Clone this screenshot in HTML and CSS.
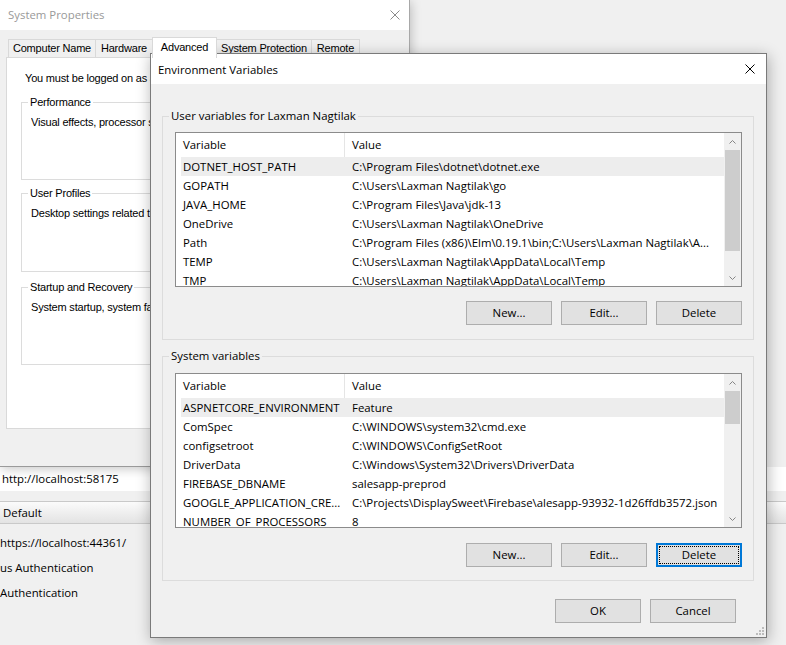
FILE: index.html
```html
<!DOCTYPE html>
<html>
<head>
<meta charset="utf-8">
<title>Environment Variables</title>
<link rel="stylesheet" href="styles.css">
</head>
<body>
<div class="desktop">

  <div class="vs">
    <div class="vs-top"></div>
    <div class="vs-url">http://localhost:58175</div>
    <div class="vs-combo">Default</div>
    <div class="vs-lines">
      <div>https://localhost:44361/</div>
      <div>us Authentication</div>
      <div>Authentication</div>
    </div>
  </div>

  <div class="win sysprops">
    <div class="titlebar sp-title">
      <span>System Properties</span>
      <svg class="close sp-close" width="10" height="10" viewBox="0 0 10 10"><path d="M0.5 0.5 L9.5 9.5 M9.5 0.5 L0.5 9.5" stroke="#8a8a8a" stroke-width="1" fill="none"/></svg>
    </div>
    <div class="sp-body">
      <div class="tabs">
        <div class="tab t-cn">Computer Name</div>
        <div class="tab t-hw">Hardware</div>
        <div class="tab t-adv active">Advanced</div>
        <div class="tab t-sp">System Protection</div>
        <div class="tab t-rm last">Remote</div>
      </div>
      <div class="panel">
        <div class="logon">You must be logged on as an Administrator to make most of these changes.</div>
        <fieldset class="sgrp g-perf">
          <legend>Performance</legend>
          <div class="desc">Visual effects, processor scheduling, memory usage, and virtual memory</div>
        </fieldset>
        <fieldset class="sgrp g-prof">
          <legend>User Profiles</legend>
          <div class="desc">Desktop settings related to your sign-in</div>
        </fieldset>
        <fieldset class="sgrp g-start">
          <legend>Startup and Recovery</legend>
          <div class="desc">System startup, system failure, and debugging information</div>
        </fieldset>
      </div>
    </div>
  </div>

  <div class="win env">
    <div class="titlebar env-title">
      <span>Environment Variables</span>
      <svg class="close env-close" width="10" height="10" viewBox="0 0 10 10"><path d="M0.5 0.5 L9.5 9.5 M9.5 0.5 L0.5 9.5" stroke="#000" stroke-width="1" fill="none"/></svg>
    </div>
    <div class="env-body">
      <fieldset class="grp g-user">
        <legend>User variables for Laxman Nagtilak</legend>
        <div class="lv">
          <div class="lv-main">
            <div class="lv-head"><div class="hc">Variable</div><div class="hc">Value</div></div>
            <div class="lv-row sel"><div>DOTNET_HOST_PATH</div><div>C:\Program Files\dotnet\dotnet.exe</div></div>
            <div class="lv-row"><div>GOPATH</div><div>C:\Users\Laxman Nagtilak\go</div></div>
            <div class="lv-row"><div>JAVA_HOME</div><div>C:\Program Files\Java\jdk-13</div></div>
            <div class="lv-row"><div>OneDrive</div><div>C:\Users\Laxman Nagtilak\OneDrive</div></div>
            <div class="lv-row"><div>Path</div><div>C:\Program Files (x86)\Elm\0.19.1\bin;C:\Users\Laxman Nagtilak\A...</div></div>
            <div class="lv-row"><div>TEMP</div><div>C:\Users\Laxman Nagtilak\AppData\Local\Temp</div></div>
            <div class="lv-row"><div>TMP</div><div>C:\Users\Laxman Nagtilak\AppData\Local\Temp</div></div>
          </div>
          <div class="sb">
            <div class="sb-btn"><svg width="7" height="4" viewBox="0 0 7 4"><polyline points="0.5,3.5 3.5,0.5 6.5,3.5" fill="none" stroke="#858585" stroke-width="1"/></svg></div>
            <div class="sb-track"><div class="sb-thumb thumb-user"></div></div>
            <div class="sb-btn"><svg width="7" height="4" viewBox="0 0 7 4"><polyline points="0.5,0.5 3.5,3.5 6.5,0.5" fill="none" stroke="#858585" stroke-width="1"/></svg></div>
          </div>
        </div>
        <div class="btns">
          <div class="btn">New...</div>
          <div class="btn">Edit...</div>
          <div class="btn">Delete</div>
        </div>
      </fieldset>

      <fieldset class="grp g-sys">
        <legend>System variables</legend>
        <div class="lv">
          <div class="lv-main">
            <div class="lv-head"><div class="hc">Variable</div><div class="hc">Value</div></div>
            <div class="lv-row sel"><div>ASPNETCORE_ENVIRONMENT</div><div>Feature</div></div>
            <div class="lv-row"><div>ComSpec</div><div>C:\WINDOWS\system32\cmd.exe</div></div>
            <div class="lv-row"><div>configsetroot</div><div>C:\WINDOWS\ConfigSetRoot</div></div>
            <div class="lv-row"><div>DriverData</div><div>C:\Windows\System32\Drivers\DriverData</div></div>
            <div class="lv-row"><div>FIREBASE_DBNAME</div><div>salesapp-preprod</div></div>
            <div class="lv-row"><div>GOOGLE_APPLICATION_CRE...</div><div>C:\Projects\DisplaySweet\Firebase\alesapp-93932-1d26ffdb3572.json</div></div>
            <div class="lv-row"><div>NUMBER_OF_PROCESSORS</div><div>8</div></div>
          </div>
          <div class="sb">
            <div class="sb-btn"><svg width="7" height="4" viewBox="0 0 7 4"><polyline points="0.5,3.5 3.5,0.5 6.5,3.5" fill="none" stroke="#858585" stroke-width="1"/></svg></div>
            <div class="sb-track"><div class="sb-thumb thumb-sys"></div></div>
            <div class="sb-btn"><svg width="7" height="4" viewBox="0 0 7 4"><polyline points="0.5,0.5 3.5,3.5 6.5,0.5" fill="none" stroke="#858585" stroke-width="1"/></svg></div>
          </div>
        </div>
        <div class="btns btns-sys">
          <div class="btn">New...</div>
          <div class="btn">Edit...</div>
          <div class="btn focus">Delete</div>
        </div>
      </fieldset>

      <div class="env-foot">
        <div class="btn">OK</div>
        <div class="btn">Cancel</div>
      </div>
    </div>
    <svg class="grip" width="8" height="8" viewBox="0 0 8 8">
      <rect x="6" y="0" width="2" height="2" fill="#bcbcbc"/>
      <rect x="3" y="3" width="2" height="2" fill="#bcbcbc"/>
      <rect x="6" y="3" width="2" height="2" fill="#bcbcbc"/>
      <rect x="0" y="6" width="2" height="2" fill="#bcbcbc"/>
      <rect x="3" y="6" width="2" height="2" fill="#bcbcbc"/>
      <rect x="6" y="6" width="2" height="2" fill="#bcbcbc"/>
    </svg>
  </div>

</div>
</body>
</html>
```

FILE: styles.css
```css
* { box-sizing: border-box; }

html, body {
  margin: 0;
  padding: 0;
}

body {
  width: 786px;
  height: 645px;
  overflow: hidden;
  background: #f0f0f0;
  font-family: "Open Sans", "Noto Sans", sans-serif;
  font-size: 11.4px;
  color: #000;
}

.desktop {
  position: relative;
  width: 786px;
  height: 645px;
  overflow: hidden;
  background: #f0f0f0;
}

/* ---------- background Visual Studio page ---------- */
.vs {
  position: absolute;
  left: 0;
  top: 0;
  width: 786px;
  height: 645px;
  display: flex;
  flex-direction: column;
  background: #f0f0f0;
}
.vs-top { height: 467px; flex: none; }
.vs-url {
  height: 24px;
  line-height: 24px;
  background: #fff;
  padding-left: 2px;
  white-space: nowrap;
}
.vs-combo {
  margin-top: 10px;
  height: 23px;
  line-height: 21px;
  padding-left: 3px;
  border-top: 1px solid #c9c9c9;
  border-bottom: 1px solid #c9c9c9;
  background: linear-gradient(#fbfbfb, #e3e3e3);
}
.vs-lines { padding-top: 6px; }
.vs-lines div { line-height: 25px; white-space: nowrap; }

/* ---------- windows ---------- */
.win { position: absolute; }

.titlebar {
  height: 30px;
  background: #fff;
  display: flex;
  align-items: center;
  justify-content: space-between;
  flex: none;
}

/* System Properties (inactive) */
.sysprops {
  left: 0;
  top: 0;
  width: 410px;
  height: 467px;
  background: #f0f0f0;
  border-right: 1px solid #a8a8a8;
  border-bottom: 1px solid #9a9a9a;
  box-shadow: 1px 2px 10px rgba(0, 0, 0, 0.22);
  font-family: "Liberation Sans", Arial, sans-serif;
  font-size: 11px;
  letter-spacing: -0.2px;
}
.sp-title {
  padding-left: 8px;
  padding-bottom: 1px;
  color: #999;
  font-family: "Open Sans", "Noto Sans", sans-serif;
  font-size: 11.4px;
  letter-spacing: 0;
}
.sp-close { margin-right: 9px; }

.sp-body { padding-top: 7px; }

.tabs {
  display: flex;
  align-items: flex-end;
  height: 20px;
  margin-left: 8px;
}
.tab {
  height: 18px;
  line-height: 17px;
  border-top: 1px solid #d9d9d9;
  border-left: 1px solid #d9d9d9;
  text-align: center;
  white-space: nowrap;
  background: #f0f0f0;
}
.tab.last { border-right: 1px solid #d9d9d9; }
.tab.active {
  height: 21px;
  line-height: 18px;
  margin-bottom: -1px;
  background: #fff;
  position: relative;
  z-index: 1;
  border-right: 1px solid #d9d9d9;
}
.t-cn { width: 87px; }
.t-hw { width: 57px; }
.t-adv { width: 65px; }
.t-sp { width: 94px; border-left: none; }
.t-rm { width: 49px; }

.panel {
  margin-left: 6px;
  width: 398px;
  height: 372px;
  background: #fff;
  border: 1px solid #d9d9d9;
  padding-top: 13px;
  display: flex;
  flex-direction: column;
}
/* the part of these lines that lies under the Environment Variables dialog is clipped */
.logon {
  margin-left: 18px;
  width: 125px;
  line-height: 14px;
  white-space: nowrap;
  overflow: hidden;
}
.sgrp {
  margin: 0 0 0 14px;
  width: 370px;
  padding: 6px 0 0 9px;
  border: 1px solid #dcdcdc;
  min-width: 0;
}
.sgrp legend {
  line-height: 14px;
  padding: 0 2px;
  margin-left: -3px;
}
.sgrp .desc {
  width: 119px;
  line-height: 14px;
  white-space: nowrap;
  overflow: hidden;
}
.g-perf { margin-top: 10px; height: 85px; }
.g-prof { margin-top: 6px; height: 86px; }
.g-start { margin-top: 8px; height: 85px; }

/* Environment Variables (active) */
.env {
  left: 150px;
  top: 53px;
  width: 617px;
  height: 585px;
  background: #f0f0f0;
  border: 1px solid #7a7a7a;
  box-shadow: 1px 3px 14px rgba(0, 0, 0, 0.3);
  display: flex;
  flex-direction: column;
}
.env-title { padding-left: 7px; }
.env-close { margin-right: 11px; }

.env-body {
  padding: 24px 0 14px 0;
  display: flex;
  flex-direction: column;
}

.grp {
  margin: 0 12px 0 11px;
  border: 1px solid #dcdcdc;
  padding: 8px 11px 14px 12px;
  min-width: 0;
}
.grp legend {
  line-height: 16px;
  padding: 0 2px;
  margin-left: -6px;
}
.g-sys {
  margin-top: 8px;
  padding-top: 9px;
  padding-bottom: 13px;
}

.lv {
  height: 155px;
  border: 1px solid #8b8b8b;
  background: #fff;
  display: flex;
}
.lv-main {
  flex: 1;
  min-width: 0;
  overflow: hidden;
}
.lv-head {
  height: 24px;
  display: grid;
  grid-template-columns: 169px 1fr;
}
.hc {
  line-height: 23px;
  padding-left: 7px;
  white-space: nowrap;
}
.hc:first-child { border-right: 1px solid #e5e5e5; }

.lv-row {
  height: 19px;
  line-height: 19px;
  margin-left: 5px;
  display: grid;
  grid-template-columns: 164px 1fr;
  white-space: nowrap;
}
.lv-row div { overflow: hidden; }
.lv-row div:first-child { padding-left: 2px; }
.lv-row div:last-child { padding-left: 7px; }
.lv-row.sel { background: #ededed; }

.sb {
  width: 17px;
  flex: none;
  background: #f0f0f0;
  display: flex;
  flex-direction: column;
}
.sb-btn {
  height: 17px;
  flex: none;
  display: flex;
  align-items: center;
  justify-content: center;
}
.sb-track { flex: 1; }
.sb-thumb {
  margin: 0 1px;
  background: #cdcdcd;
}
.thumb-user { height: 101px; }
.thumb-sys { height: 33px; }

.btns {
  margin-top: 14px;
  display: flex;
  justify-content: flex-end;
  gap: 9px;
}
.btns-sys { margin-top: 15px; }

.btn {
  width: 86px;
  height: 24px;
  line-height: 22px;
  border: 1px solid #adadad;
  background: #e1e1e1;
  text-align: center;
  white-space: nowrap;
}
.btn.focus {
  border: 2px solid #0078d7;
  line-height: 20px;
  outline: 1px dotted #000;
  outline-offset: -4px;
}

.env-foot {
  margin-top: 18px;
  padding-right: 30px;
  display: flex;
  justify-content: flex-end;
  gap: 9px;
}

.grip {
  position: absolute;
  right: 2px;
  bottom: 2px;
}
```
